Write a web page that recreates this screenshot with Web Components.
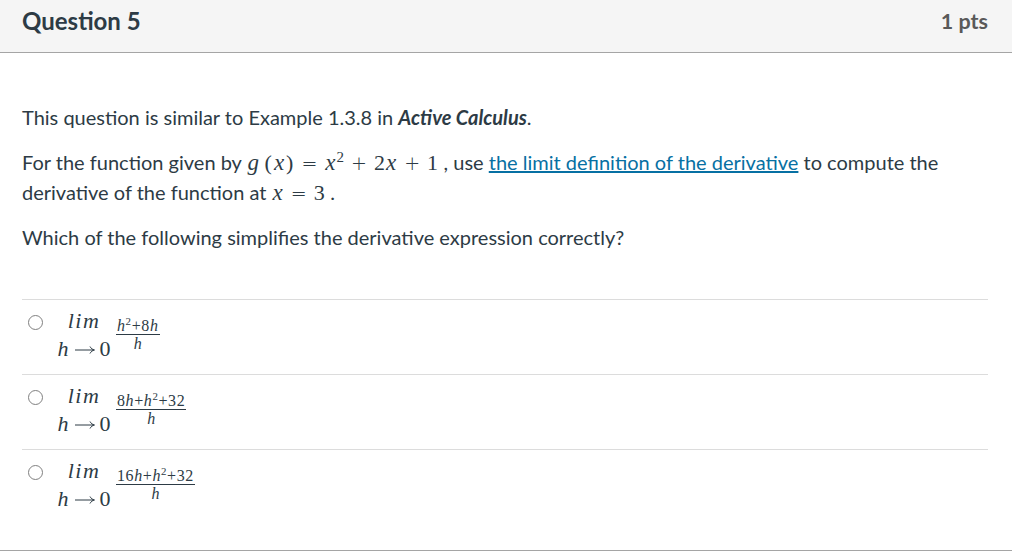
<!DOCTYPE html>
<html>
<head>
<meta charset="utf-8">
<title>Question 5</title>
<style>
  html, body { margin: 0; padding: 0; background: #fff; }
  body { font-family: "Lato", "Liberation Sans", sans-serif; color: #2d3b45; overflow: hidden; }
  a { color: #0770a3; }
  sup { line-height: 0; font-size: 0.68em; }
  .op { margin: 0 7px; font-family: "DejaVu Sans", sans-serif; font-size: 19px; font-weight: 200; }
  .paren { margin: 0 1px; }
  .paren.first { margin-left: -1px; }
  math-text i { font-size: 23px; margin: 0 1px; }
</style>
</head>
<body>
<quiz-question>
  <span slot="title">Question 5</span>
  <span slot="points">1 pts</span>
  <p>This question is similar to Example 1.3.8 in <b><i>Active Calculus</i></b>.</p>
  <p>For the function given by <math-text><i>g</i> <span class="paren first">(</span><i>x</i><span class="paren">)</span><span class="op">=</span><i>x</i><sup>2</sup><span class="op">+</span>2<i>x</i><span class="op">+</span>1</math-text>, use <a href="#">the limit definition of the derivative</a> to compute the derivative of the function at <math-text><i>x</i><span class="op">=</span>3</math-text>.</p>
  <p>Which of the following simplifies the derivative expression correctly?</p>
  <quiz-answer slot="answers"><limit-frac><span slot="top"><i>h</i><sup>2</sup>+8<i>h</i></span><i slot="bottom">h</i></limit-frac></quiz-answer>
  <quiz-answer slot="answers"><limit-frac><span slot="top">8<i>h</i>+<i>h</i><sup>2</sup>+32</span><i slot="bottom">h</i></limit-frac></quiz-answer>
  <quiz-answer slot="answers"><limit-frac><span slot="top">16<i>h</i>+<i>h</i><sup>2</sup>+32</span><i slot="bottom">h</i></limit-frac></quiz-answer>
</quiz-question>

<script>
const questionTemplate = document.createElement('template');
questionTemplate.innerHTML = `
  <style>
    :host {
      display: block;
      height: 551px;
      box-sizing: border-box;
      border-bottom: 1px solid #a5a5a5;
    }
    header {
      display: flex;
      justify-content: space-between;
      align-items: center;
      height: 53px;
      padding: 0 24px 11px 22px;
      box-sizing: border-box;
      background: #f5f5f5;
      border-bottom: 1px solid #a5a5a5;
    }
    .title { font-size: 24px; font-weight: 700; }
    .points { font-size: 21.5px; font-weight: 700; color: #595959; }
    .text { padding: 49px 24px 0 22px; font-size: 20px; line-height: 30px; }
    ::slotted(p) { margin: 0 0 15px; }
    .answers { margin: 47px 24px 0 22px; }
  </style>
  <header>
    <div class="title"><slot name="title"></slot></div>
    <div class="points"><slot name="points"></slot></div>
  </header>
  <div class="text"><slot></slot></div>
  <div class="answers"><slot name="answers"></slot></div>
`;

class QuizQuestion extends HTMLElement {
  connectedCallback() {
    if (!this.shadowRoot) {
      this.attachShadow({ mode: 'open' });
      this.shadowRoot.appendChild(questionTemplate.content.cloneNode(true));
    }
  }
}

const answerTemplate = document.createElement('template');
answerTemplate.innerHTML = `
  <style>
    :host {
      display: flex;
      align-items: flex-start;
      height: 75px;
      box-sizing: border-box;
      border-top: 1px solid #dcdcdc;
      padding: 7px 0 0 6px;
    }
    .radio {
      width: 15px;
      height: 15px;
      margin: 8px 14px 0 0;
      box-sizing: border-box;
      flex: none;
      border: 1.5px solid #808080;
      border-radius: 50%;
      background: #fff;
    }
  </style>
  <span class="radio"></span>
  <slot></slot>
`;

class QuizAnswer extends HTMLElement {
  connectedCallback() {
    if (!this.shadowRoot) {
      this.attachShadow({ mode: 'open' });
      this.shadowRoot.appendChild(answerTemplate.content.cloneNode(true));
    }
  }
}

const mathTemplate = document.createElement('template');
mathTemplate.innerHTML = `
  <style>
    :host {
      display: inline;
      font-family: "Liberation Serif", serif;
      font-size: 22px;
      line-height: 0;
    }
  </style>
  <slot></slot>
`;

class MathText extends HTMLElement {
  connectedCallback() {
    if (!this.shadowRoot) {
      this.attachShadow({ mode: 'open' });
      this.shadowRoot.appendChild(mathTemplate.content.cloneNode(true));
    }
  }
}

const limitTemplate = document.createElement('template');
limitTemplate.innerHTML = `
  <style>
    :host {
      display: flex;
      align-items: flex-start;
      font-family: "Liberation Serif", serif;
      color: #2d3b45;
    }
    .lim {
      display: flex;
      flex-direction: column;
      align-items: center;
      width: 54px;
      margin-right: 5px;
      font-size: 22px;
      line-height: 28px;
    }
    .lim > i { letter-spacing: 1.5px; }
    .lim div { display: flex; align-items: center; white-space: nowrap; }
    .lim svg { margin: 2px 5px 0 6px; }
    .frac {
      display: flex;
      flex-direction: column;
      align-items: center;
      margin-top: 10px;
      font-size: 16px;
      line-height: 17px;
    }
    .top { padding: 0 1px; border-bottom: 1px solid #2d3b45; white-space: nowrap; letter-spacing: 0.6px; }
  </style>
  <div class="lim">
    <i>lim</i>
    <div><i>h</i><svg width="20" height="12" viewBox="0 0 20 12" fill="none" stroke="#2d3b45" stroke-width="1"><path d="M0 6H19M15 2.500C16 4.500 17.500 5.500 19.500 6C17.500 6.500 16 7.500 15 9.500"/></svg>0</div>
  </div>
  <div class="frac">
    <div class="top"><slot name="top"></slot></div>
    <div class="bottom"><slot name="bottom"></slot></div>
  </div>
`;

class LimitFrac extends HTMLElement {
  connectedCallback() {
    if (!this.shadowRoot) {
      this.attachShadow({ mode: 'open' });
      this.shadowRoot.appendChild(limitTemplate.content.cloneNode(true));
    }
  }
}

customElements.define('quiz-question', QuizQuestion);
customElements.define('quiz-answer', QuizAnswer);
customElements.define('math-text', MathText);
customElements.define('limit-frac', LimitFrac);
</script>
</body>
</html>
